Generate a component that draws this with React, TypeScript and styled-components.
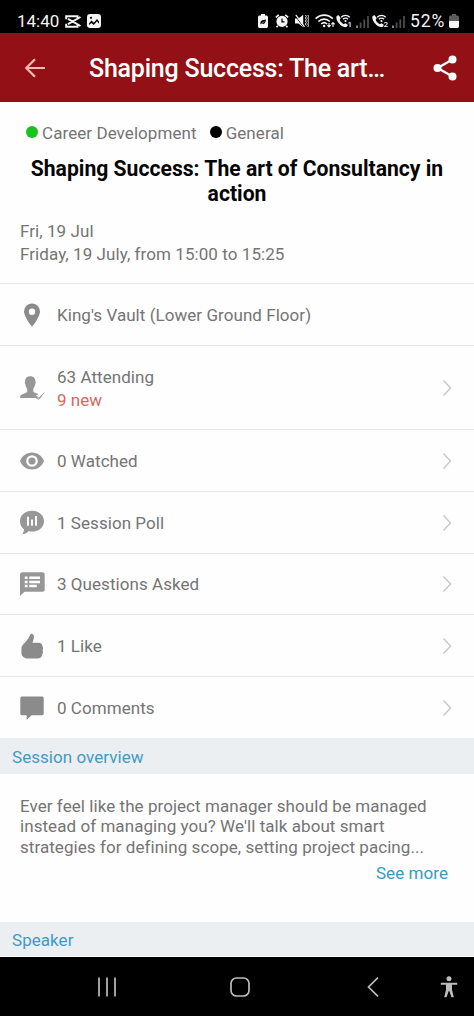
import React from "react";
import styled, { createGlobalStyle } from "styled-components";

const GlobalStyle = createGlobalStyle`
  * { box-sizing: border-box; }
  body { margin: 0; background: #fff; font-family: Roboto, "Liberation Sans", sans-serif; }
  svg { display: block; flex: none; }
`;

const Screen = styled.div`
  width: 474px;
  height: 1016px;
  display: flex;
  flex-direction: column;
  overflow: hidden;
  background: #fefefe;
  color: #747474;
`;

const StatusBar = styled.div`
  height: 33px;
  flex: none;
  background: #000;
  color: #f4f4f4;
  display: flex;
  align-items: center;
  justify-content: space-between;
  padding: 9px 15px 0 17px;
`;

const StatusLeft = styled.div`
  display: flex;
  align-items: center;
  gap: 6px;
`;

const StatusRight = styled.div`
  display: grid;
  grid-template-columns: 17px 19.5px 20px 21.5px 20px 16px 19.5px 18.5px 39px 10px;
  align-items: center;
`;

const StatusText = styled.span<{ $size: number; $spacing: number }>`
  font-size: ${(p) => p.$size}px;
  line-height: 20px;
  letter-spacing: ${(p) => p.$spacing}px;
  white-space: nowrap;
`;

const AppBar = styled.header`
  height: 69px;
  flex: none;
  background: #931116;
  color: #fff;
  display: flex;
  align-items: center;
  padding: 0 17px 0 24px;
`;

const AppTitle = styled.h1`
  flex: 1;
  margin: 2px 0 0 43px;
  font-size: 25px;
  line-height: 30px;
  font-weight: 500;
  letter-spacing: -0.22px;
  white-space: nowrap;
`;

const Intro = styled.section`
  height: 181px;
  flex: none;
  padding: 20px 20px 0;
  display: flex;
  flex-direction: column;
`;

const Tags = styled.div`
  display: flex;
  gap: 13px;
  padding-left: 6px;
`;

const Tag = styled.span<{ $dot: string }>`
  display: flex;
  align-items: center;
  gap: 4px;
  font-size: 17px;
  line-height: 23px;
  letter-spacing: 0.07px;
  white-space: nowrap;
  &::before {
    content: "";
    width: 12px;
    height: 12px;
    margin-top: -3px;
    border-radius: 50%;
    background: ${(p) => p.$dot};
  }
`;

const SessionTitle = styled.h2`
  margin: 11px -10px 0;
  color: #050505;
  font-size: 21.15px;
  line-height: 25px;
  font-weight: 700;
  text-align: center;
  white-space: nowrap;
`;

const Schedule = styled.div`
  margin-top: 14px;
  font-size: 17px;
  line-height: 23px;
  letter-spacing: 0.07px;
  white-space: nowrap;
`;

const Row = styled.div<{ $height: number }>`
  height: ${(p) => p.$height}px;
  flex: none;
  display: flex;
  align-items: center;
  border-top: 1px solid #e7e7e7;
  padding: 0 21px 0 20px;
`;

const RowIcon = styled.div`
  width: 24px;
  height: 26px;
  margin-right: 13px;
  color: #8b8b8b;
`;

const RowText = styled.div<{ $top?: number }>`
  flex: 1;
  padding-top: ${(p) => p.$top ?? 1}px;
  font-size: 17px;
  line-height: 23px;
  letter-spacing: 0.05px;
  white-space: nowrap;
`;

const NewCount = styled.div`
  color: #d4685a;
`;

const SectionHeading = styled.h3<{ $height: number }>`
  height: ${(p) => p.$height}px;
  flex: none;
  margin: 0;
  padding: 2px 12px 0;
  display: flex;
  align-items: center;
  background: #ebeff2;
  color: #429ac4;
  font-size: 17px;
  font-weight: 400;
  letter-spacing: 0.05px;
`;

const Overview = styled.section`
  height: 148px;
  flex: none;
  padding: 22px 20px 0;
  font-size: 17px;
  line-height: 20.3px;
  letter-spacing: 0.06px;
  white-space: nowrap;
`;

const SeeMore = styled.div`
  margin: 6px 6px 0 0;
  text-align: right;
  color: #379ac2;
`;

const NavBar = styled.nav`
  flex: none;
  height: 59px;
  margin-top: auto;
  background: #000;
  color: #bdbdbd;
  display: grid;
  grid-template-columns: 117px 245px 17px 60.5px 18px;
  align-items: center;
  padding-top: 1px;
`;

const NavItem = styled.div<{ $column: number; $align: string }>`
  grid-row: 1;
  grid-column: ${(p) => p.$column};
  justify-self: ${(p) => p.$align};
`;

const Chevron = () => (
  <svg width="12" height="18" viewBox="0 0 12 18" fill="none" stroke="#c9c9c9" strokeWidth="1.5">
    <path d="M2.500 1.500 9.500 9l-7 7.500" />
  </svg>
);

const PinIcon = () => (
  <svg width="24" height="26" viewBox="0 0 24 26" fill="currentColor">
    <path fillRule="evenodd" d="M12 1.500a8 8 0 0 0-8 8C4 15.300 12 24.700 12 24.700S20 15.300 20 9.500a8 8 0 0 0-8-8Zm0 5a3.200 3.200 0 1 1 0 6.400 3.200 3.200 0 0 1 0-6.400Z" />
  </svg>
);

const PersonIcon = () => (
  <svg width="26" height="26" viewBox="0 0 26 26">
    <path d="M10.200 1.200c3.500 0 5.300 2.200 5.200 5.300.5.600.4 1.900-.2 2.500-.3 2-1 3.700-1.900 4.800v2.400c0 1 1.600 1.600 3.900 2.400l1.300.6-3.500 1.600 3 2.200H0c0-2.900 1.500-3.700 4.200-4.500 2-.7 3-1.300 3-2.300v-2.400c-1-1.100-1.600-2.800-1.900-4.800-.6-.6-.7-1.900-.2-2.500-.1-3.100 1.600-5.300 5.100-5.300Z" fill="#979797" />
    <path d="m15 20.300 4 2.800 5.300-5.500M16 22.800l2.800 1.600 3-3" fill="none" stroke="#979797" strokeWidth="1" />
  </svg>
);

const EyeIcon = () => (
  <svg width="24" height="26" viewBox="0 0 24 26">
    <path d="M0 13C2 8 6.500 4.500 12 4.500S22 8 24 13c-2 5-6.500 8.500-12 8.500S2 18 0 13Z" fill="#979797" />
    <circle cx="12" cy="13" r="4.700" fill="none" stroke="#fff" strokeWidth="2.300" />
  </svg>
);

const PollIcon = () => (
  <svg width="24" height="26" viewBox="0 0 24 26">
    <path d="M12 .7c6.700 0 12 4.500 12 10.500s-5.300 10.400-12 10.400c-1.300 0-2.400-.1-3.400-.5-1.800 2.100-4 3.200-6.600 3.300 1.300-1.400 1.800-3 2-5C1.500 17.500 0 14.600 0 11.200 0 5.200 5.300.7 12 .7Z" fill="#979797" />
    <path d="M8 6.800v9M12 9.500v6.300M16 6v9.800" stroke="#fff" strokeWidth="2" />
  </svg>
);

const QuestionIcon = () => (
  <svg width="25" height="26" viewBox="0 0 25 26">
    <path d="M2.300 1.300h20.200c1.300 0 2.200 1 2.200 2.300v14.800c0 1.300-.9 2.300-2.200 2.300H4.500L0 25V3.600c0-1.300 1-2.300 2.300-2.300Z" fill="#979797" />
    <path d="M4.800 6.700h2.800M9.300 6.700H20M4.800 10.900h2.800M9.300 10.900H20M4.800 15.100h2.800M9.300 15.100h7.500" stroke="#fff" strokeWidth="2.500" />
  </svg>
);

const LikeIcon = () => (
  <svg width="24" height="26" viewBox="0 0 24 26" fill="currentColor">
    <path d="M13 1.500c-1-1.100-2.300-.7-3 .7C8.500 5.600 6.500 8 3.500 11c-1.400 1.500-2.100 3-2.100 5v3.500c0 3.600 2.700 6 6.500 6h9c3.400 0 5.300-1.400 5.300-4.200 1-1.400 1-2.800.4-4 .8-1.300.7-2.700-.1-3.800 0-2.200-1.400-3.700-4.100-3.700h-6c1-2.200 1.500-4.600 1.500-6.500 0-.7-.4-1.300-.9-1.800Z" />
  </svg>
);

const CommentIcon = () => (
  <svg width="24" height="26" viewBox="0 0 24 26" fill="currentColor">
    <path d="M2 1.500h20c1.200 0 1.700.6 1.700 1.700V18.600c0 1.200-.5 1.700-1.700 1.700H11.500L6.700 25v-4.700H2c-1.100 0-1.700-.5-1.700-1.700V3.200c0-1.100.6-1.700 1.700-1.700Z" />
  </svg>
);

const CutIcon = () => (
  <svg width="16" height="13" viewBox="0 0 16 13" fill="none" stroke="currentColor" strokeWidth="2">
    <path d="M15.500 2 3 9.200M15.500 11 3 3.800M1.200 4.200V1.200H12.500v1.600M1.200 8.800v3H12.500v-1.600" />
  </svg>
);

const PictureIcon = () => (
  <svg width="14" height="14" viewBox="0 0 14 14">
    <rect width="14" height="14" rx="3" fill="currentColor" />
    <path d="m2 9.500 2.500-3 2.300 2.200L10 5l2 2.500v2.200l-2-2.500-3.200 3.800-2.300-2L2 11Z" fill="#000" />
    <circle cx="4" cy="3.800" r="1.100" fill="#000" />
  </svg>
);

const BatterySaverIcon = () => (
  <svg width="10" height="14" viewBox="0 0 10 14">
    <path d="M3 0h4v1.500h1.300c1 0 1.700.7 1.700 1.700v9c0 1-.7 1.800-1.700 1.800H1.700C.7 14 0 13.200 0 12.200v-9c0-1 .7-1.700 1.700-1.700H3Z" fill="currentColor" />
    <path d="M2.500 10.500C2 7 4 5.600 7.800 5.400 7.800 9 6 10.700 3.500 9.800Z" fill="#000" />
    <path d="m3 10.500 3-3" stroke="#fff" strokeWidth=".7" />
  </svg>
);

const AlarmIcon = () => (
  <svg width="14" height="14" viewBox="0 0 14 14" fill="none" stroke="currentColor">
    <path d="m.8 3.300 3-2.500M13.200 3.300l-3-2.500M2.800 11.800l-1.300 1.500M11.200 11.800l1.300 1.500" strokeWidth="1.700" />
    <circle cx="7" cy="7.400" r="5.600" fill="currentColor" stroke="none" />
    <path d="M7 4.500v3.300h2.500" stroke="#000" strokeWidth="1.200" />
  </svg>
);

const VibrateIcon = () => (
  <svg width="14" height="14" viewBox="0 0 14 14" fill="currentColor">
    <path d="M0 4.500h3.500L8.200.8v12.400L3.500 9.500H0Z" />
    <path d="m0 1.500 9 12" stroke="#000" strokeWidth="1" />
    <path d="m.8.800 8.700 12" stroke="currentColor" strokeWidth="1.200" />
    <path d="m10.500 1 .8 1.500-.8 1.500.8 1.500-.8 1.500.8 1.500-.8 1.500.8 1.500M12.800 1l.8 1.500-.8 1.500.8 1.500-.8 1.500.8 1.500-.8 1.500.8 1.500-.8 1.500" fill="none" stroke="currentColor" strokeWidth="1" />
  </svg>
);

const WifiIcon = () => (
  <svg width="20" height="14" viewBox="0 0 20 14" fill="none" stroke="currentColor" strokeWidth="1.700">
    <path d="M.6 4.700c4.900-4.800 12.300-4.800 17.200 0M3.400 7.500c3.300-3.100 8.200-3.100 11.500 0M6.200 10c1.700-1.600 4.200-1.600 5.900 0" />
    <circle cx="9.100" cy="12" r="1.200" fill="currentColor" stroke="none" />
    <path d="M14 9v3.800m-1.600-1.600L14 13l1.600-1.800M18 13V8.700m-1.600 1.700L18 8.500l1.600 1.900" strokeWidth="1.100" />
  </svg>
);

const CallLabel = styled.span`
  font-size: 8px;
  line-height: 8px;
  font-weight: 500;
  align-self: flex-end;
  margin-left: -2.5px;
`;

const CallGroup = styled.div`
  display: flex;
  width: 17px;
  height: 15px;
`;

const WifiCall = ({ sim }: { sim: string }) => (
  <CallGroup>
    <svg width="14" height="14" viewBox="0 0 14 14" fill="none" stroke="currentColor">
      <path d="M.4 2.600C1 1.600 2 .9 2.700 1.200L4.600 4c.2.500-.8 1.300-.9 1.800.6 2 2 3.500 4 4.400.6 0 1.200-1 1.800-.9l2.200 1.500c.2 1-.8 2-1.700 2.300C5.500 13.700-.5 7 .4 2.600Z" fill="currentColor" stroke="none" />
      <path d="M5.200 3.200C7.500.8 11.400.8 13.700 3.200M7 5.200c1.400-1.400 3.600-1.400 5 0" strokeWidth="1.300" />
      <circle cx="9.500" cy="7" r="1.100" fill="currentColor" stroke="none" />
    </svg>
    <CallLabel>{sim}</CallLabel>
  </CallGroup>
);

const SignalIcon = () => (
  <svg width="13" height="13" viewBox="0 0 13 13" stroke="#515151" strokeWidth="1.700">
    <path d="M1 10.500V13" stroke="#999" />
    <path d="M4.600 7.500V13M8.300 4.500V13M12 1v12" />
  </svg>
);

const BatteryIcon = () => (
  <svg width="10" height="14" viewBox="0 0 10 14">
    <path d="M3 0h4v1.500h1.300c1 0 1.700.7 1.700 1.700V7H0V3.200c0-1 .7-1.700 1.700-1.700H3Z" fill="#5c5c5c" />
    <path d="M0 7h10v5.200c0 1-.7 1.800-1.700 1.800H1.700C.7 14 0 13.200 0 12.200Z" fill="currentColor" />
  </svg>
);

const BackArrow = () => (
  <svg width="22" height="20" viewBox="0 0 22 20" fill="none" stroke="#f3b9b5" strokeWidth="2.200">
    <path d="M11 1.200 2.300 10l8.700 8.800M2.300 10H21" />
  </svg>
);

const ShareIcon = () => (
  <svg width="24" height="26" viewBox="0 0 24 26" fill="#fff">
    <path d="M19.500 4.500 4.500 13l15 8.500" fill="none" stroke="#fff" strokeWidth="2.300" />
    <circle cx="19.500" cy="4.500" r="4" />
    <circle cx="4.500" cy="13" r="4" />
    <circle cx="19.500" cy="21.500" r="4" />
  </svg>
);

const rows = [
  { icon: <PersonIcon />, label: "63 Attending", extra: "9 new", height: 84 },
  { icon: <EyeIcon />, label: "0 Watched", height: 62 },
  { icon: <PollIcon />, label: "1 Session Poll", height: 62 },
  { icon: <QuestionIcon />, label: "3 Questions Asked", height: 61 },
  { icon: <LikeIcon />, label: "1 Like", height: 62 },
  { icon: <CommentIcon />, label: "0 Comments", height: 62 },
];

export default function App() {
  return (
    <Screen>
      <GlobalStyle />
      <StatusBar>
        <StatusLeft>
          <StatusText $size={17} $spacing={0}>14:40</StatusText>
          <CutIcon />
          <PictureIcon />
        </StatusLeft>
        <StatusRight>
          <BatterySaverIcon />
          <AlarmIcon />
          <VibrateIcon />
          <WifiIcon />
          <WifiCall sim="1" />
          <SignalIcon />
          <WifiCall sim="2" />
          <SignalIcon />
          <StatusText $size={17.5} $spacing={0.9}>52%</StatusText>
          <BatteryIcon />
        </StatusRight>
      </StatusBar>
      <AppBar>
        <BackArrow />
        <AppTitle>Shaping Success: The art…</AppTitle>
        <ShareIcon />
      </AppBar>
      <Intro>
        <Tags>
          <Tag $dot="#19c21c">Career Development</Tag>
          <Tag $dot="#000">General</Tag>
        </Tags>
        <SessionTitle>
          Shaping Success: The art of Consultancy in
          <br />
          action
        </SessionTitle>
        <Schedule>
          Fri, 19 Jul
          <br />
          Friday, 19 July, from 15:00 to 15:25
        </Schedule>
      </Intro>
      <Row $height={62}>
        <RowIcon>
          <PinIcon />
        </RowIcon>
        <RowText>King's Vault (Lower Ground Floor)</RowText>
      </Row>
      {rows.map((row) => (
        <Row key={row.label} $height={row.height}>
          <RowIcon>{row.icon}</RowIcon>
          <RowText $top={row.extra ? 3 : 1}>
            {row.label}
            {row.extra && <NewCount>{row.extra}</NewCount>}
          </RowText>
          <Chevron />
        </Row>
      ))}
      <SectionHeading $height={36}>Session overview</SectionHeading>
      <Overview>
        Ever feel like the project manager should be managed
        <br />
        instead of managing you? We'll talk about smart
        <br />
        strategies for defining scope, setting project pacing...
        <SeeMore>See more</SeeMore>
      </Overview>
      <SectionHeading $height={34}>Speaker</SectionHeading>
      <NavBar>
        <NavItem $column={1} $align="end">
          <svg width="20" height="20" viewBox="0 0 20 20" stroke="currentColor" strokeWidth="1.700">
            <path d="M2 .5v19M10 .5v19M18 .5v19" />
          </svg>
        </NavItem>
        <NavItem $column={2} $align="center">
          <svg width="20" height="20" viewBox="0 0 20 20" fill="none" stroke="currentColor" strokeWidth="1.700">
            <rect x="1" y="1" width="18" height="18" rx="5.500" />
          </svg>
        </NavItem>
        <NavItem $column={3} $align="end">
          <svg width="12" height="20" viewBox="0 0 12 20" fill="none" stroke="currentColor" strokeWidth="1.700">
            <path d="M11 .7 1.500 10l9.500 9.300" />
          </svg>
        </NavItem>
        <NavItem $column={5} $align="center">
          <svg width="18" height="22" viewBox="0 0 18 22" fill="currentColor">
            <circle cx="9" cy="2.700" r="2.500" />
            <path d="M.8 6.700h16.400v2H12v5l1.800 7.600h-2.400L9.300 15h-.6l-2.100 6.300H4.200L6 13.700v-5H.8Z" />
          </svg>
        </NavItem>
      </NavBar>
    </Screen>
  );
}
